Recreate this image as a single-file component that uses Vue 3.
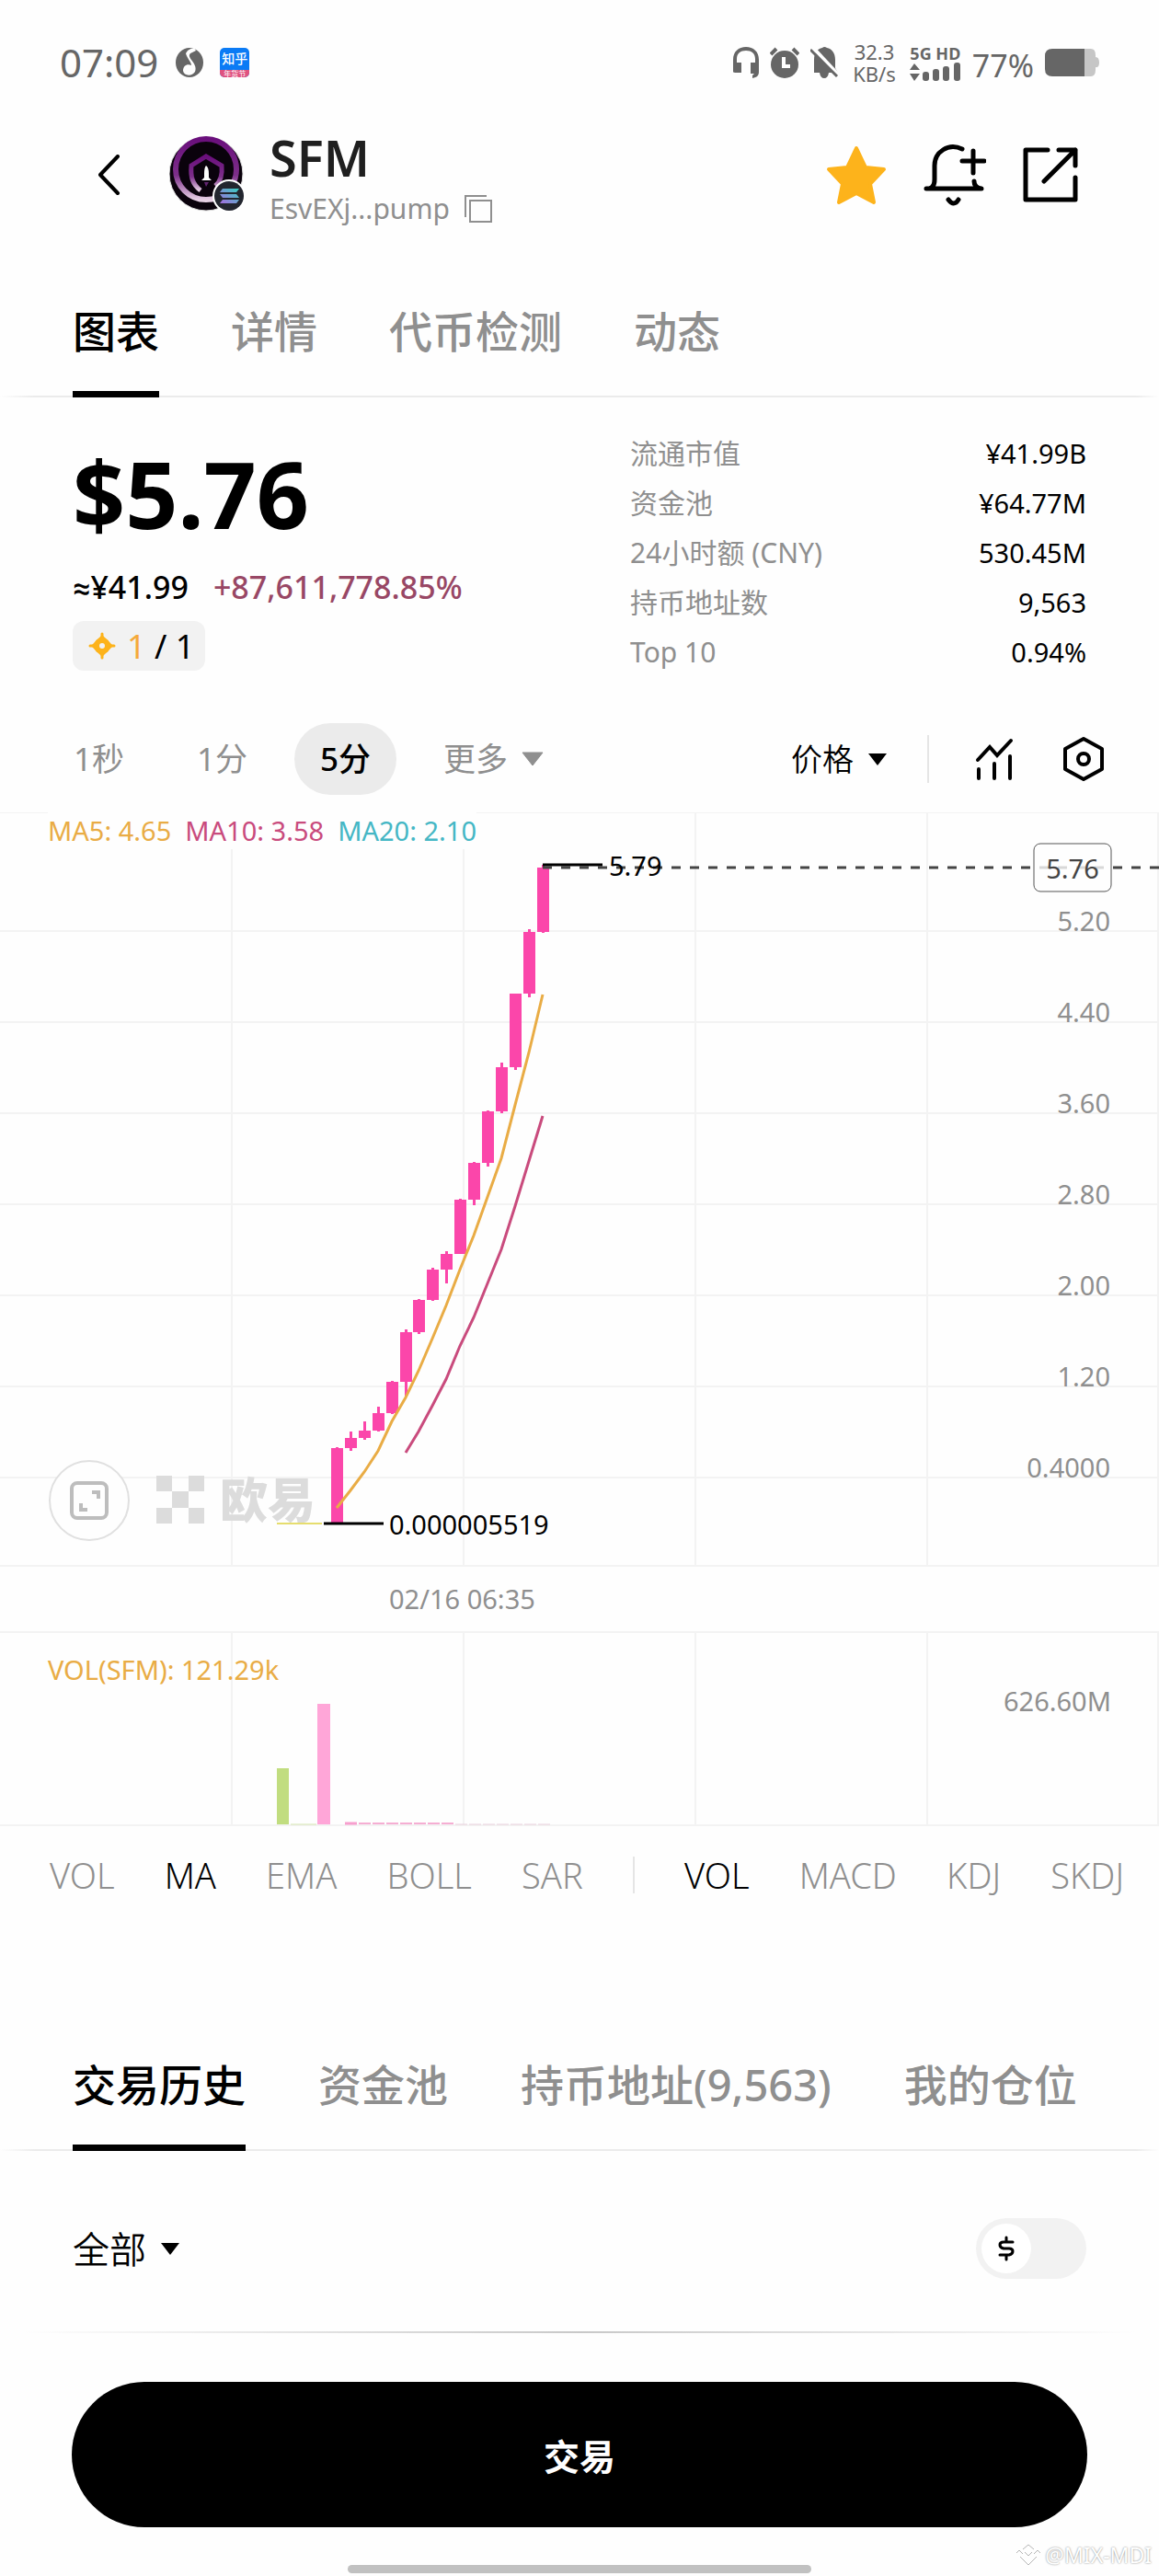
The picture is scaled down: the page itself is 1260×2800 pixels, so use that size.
<template>
  <div class="page">
    <!-- 状态栏 -->
    <div class="status-bar">
      <span class="clock">07:09</span>
      <svg class="music-icon" width="30" height="32" viewBox="0 0 30 32">
        <ellipse cx="15" cy="16" rx="15" ry="16" fill="#666" />
        <path d="M20 0L22 3L16 6C14 8 15 10 17 13C20 17 23 21 21 26C18 31 9 31 8 25C8 20 12 17 17 19C17 15 12 11 11 6C13 2 16 1 20 0Z" fill="#fefefe" />
      </svg>
      <span class="app-badge"><b>知乎</b><i>年货节</i></span>
      <div class="status-right">
        <svg width="28" height="34" viewBox="0 0 28 34" fill="#666">
          <path d="M0 27V14C0 5 6 0 14 0S28 5 28 14V27C28 31 26 33 21 34V31L23 29H19V17H24V13C24 7 20 4 14 4S4 7 4 13V17H9V28H4Q0 28 0 27Z" />
        </svg>
        <svg width="32" height="34" viewBox="0 0 32 34">
          <circle cx="16" cy="19" r="15" fill="#666" />
          <path d="M1 8L7 2M31 8L25 2" stroke="#666" stroke-width="4" />
          <path d="M15 11V21H22" fill="none" stroke="#fefefe" stroke-width="4" />
        </svg>
        <svg width="31" height="34" viewBox="0 0 31 34">
          <path d="M4 28V14C4 6 8 2 13 1Q15 -1 18 1C23 2 27 6 27 14V23L30 28H20Q19 34 15 34T10 28H1Z" fill="#666" />
          <path d="M3 1L31 31" stroke="#fefefe" stroke-width="4" />
          <path d="M0 3L29 32" stroke="#666" stroke-width="3" />
        </svg>
        <div class="net-speed"><span>32.3</span><span>KB/s</span></div>
        <div class="signal">
          <span>5G HD</span>
          <svg width="56" height="20" viewBox="0 0 56 20" fill="#666">
            <path d="M0 8L5 1L11 8ZM0 12L5 20L11 12Z" />
            <rect x="14" y="10" width="7" height="10" rx="3" />
            <rect x="25" y="7" width="7" height="13" rx="3" />
            <rect x="36" y="4" width="7" height="16" rx="3" />
            <rect x="48" y="0" width="7" height="20" rx="3" />
          </svg>
        </div>
        <span class="battery-text">77%</span>
        <svg width="59" height="30" viewBox="0 0 59 30">
          <path d="M43 0H50Q55 0 55 7V9Q59 9 59 15T55 20V23Q55 30 50 30H43Z" fill="#c6c6c6" />
          <path d="M8 0H43V30H8Q0 30 0 22V8Q0 0 8 0Z" fill="#666" />
        </svg>
      </div>
    </div>

    <!-- 代币头部 -->
    <header class="header">
      <button class="icon-btn" aria-label="返回">
        <svg width="26" height="44" viewBox="0 0 26 44">
          <path d="M23 2L4 22L23 42" fill="none" stroke="#000" stroke-width="4" stroke-linecap="round" stroke-linejoin="round" />
        </svg>
      </button>
      <svg class="avatar" width="84" height="84" viewBox="0 0 84 84">
        <defs>
          <linearGradient id="ring" x1="0" y1="0" x2="0" y2="1">
            <stop offset="0" stop-color="#6a0f7c" />
            <stop offset="0.6" stop-color="#7d2f8a" />
            <stop offset="1" stop-color="#e6cfe4" />
          </linearGradient>
          <linearGradient id="sol" x1="0" y1="1" x2="1" y2="0">
            <stop offset="0" stop-color="#a66be0" />
            <stop offset="1" stop-color="#37cfc0" />
          </linearGradient>
        </defs>
        <circle cx="40" cy="41" r="40" fill="#0a020c" stroke="#ddd" />
        <circle cx="40" cy="36" r="33" fill="none" stroke="url(#ring)" stroke-width="6" />
        <path d="M34 59C25 52 23 44 24 32L40 22L57 32C58 42 56 49 50 54" fill="none" stroke="url(#ring)" stroke-width="5" />
        <path d="M40 32Q43 34 43 41V45L46 48H35L38 45V41Q38 34 40 32Z" fill="#fff" />
        <path d="M38 50H43L40 55Z" fill="#61246f" />
        <circle cx="65" cy="65" r="18" fill="#fff" />
        <circle cx="65" cy="65" r="16" fill="#23262f" />
        <path d="M58 57H76L73 61H55ZM55 63H73L76 67H58ZM58 69H76L73 73H55Z" fill="url(#sol)" />
      </svg>
      <div class="token">
        <h1>SFM</h1>
        <div class="address">
          <span>EsvEXj...pump</span>
          <button class="icon-btn" aria-label="复制地址">
            <svg width="30" height="30" viewBox="0 0 30 30" fill="none" stroke="#8f8f8f" stroke-width="2">
              <path d="M1 24V1H24" />
              <rect x="6" y="6" width="23" height="23" />
            </svg>
          </button>
        </div>
      </div>
      <div class="header-actions">
        <button class="icon-btn" aria-label="收藏">
          <svg width="66" height="66" viewBox="0 0 66 66">
            <path d="M33 4L43 25L63 27L48 43L52 63L33 53L14 63L18 43L3 27L23 25Z" fill="#fdb31b" stroke="#fdb31b" stroke-width="4" stroke-linejoin="round" />
          </svg>
        </button>
        <button class="icon-btn" aria-label="价格提醒">
          <svg width="68" height="68" viewBox="0 0 68 68" fill="none" stroke="#000" stroke-width="5" stroke-linecap="round" stroke-linejoin="round">
            <path d="M42 6C27 -1 12 9 12 24V39Q12 48 6 49H3H63Q55 48 55 41" />
            <path d="M54 8V32M42 19H66M27 61Q33 69 38 61" />
          </svg>
        </button>
        <button class="icon-btn" aria-label="分享">
          <svg width="60" height="60" viewBox="0 0 60 60" fill="none" stroke="#000" stroke-width="5" stroke-linecap="round" stroke-linejoin="round">
            <path d="M27 3H3V57H57V33" />
            <path d="M39 3H57V20M57 3L23 37" />
          </svg>
        </button>
      </div>
    </header>

    <nav class="tabs main-tabs">
      <button v-for="t in mainTabs" :key="t" :class="{ active: t === mainTab }" @click="mainTab = t">{{ t }}</button>
    </nav>

    <!-- 价格与数据 -->
    <section class="summary">
      <div class="price-box">
        <div class="price">$5.76</div>
        <div class="price-sub">
          <span>≈¥41.99</span>
          <span class="change">+87,611,778.85%</span>
        </div>
        <div class="rank">
          <svg width="30" height="30" viewBox="0 0 30 30">
            <path d="M15 2V28M2 15H28" stroke="#fdb31b" stroke-width="3" stroke-linecap="round" />
            <path d="M15 3Q18 6 21 9Q24 12 27 15Q24 18 21 21Q18 24 15 27Q12 24 9 21Q6 18 3 15Q6 12 9 9Q12 6 15 3Z" fill="#fdb31b" />
            <circle cx="15" cy="15" r="9" fill="#fdb31b" />
            <circle cx="15" cy="15" r="3" fill="#f2f2f2" />
          </svg>
          <span><em>1</em> / 1</span>
        </div>
      </div>
      <dl class="stats">
        <div v-for="s in stats" :key="s.label">
          <dt>{{ s.label }}</dt>
          <dd>{{ s.value }}</dd>
        </div>
      </dl>
    </section>

    <div class="toolbar">
      <div class="intervals">
        <button v-for="i in intervals" :key="i" :class="{ active: i === interval }" @click="interval = i">{{ i }}</button>
        <button>
          更多
          <svg width="24" height="16" viewBox="0 0 24 16"><path d="M1 1H23L12 15Z" fill="#8f8f8f" stroke="#8f8f8f" stroke-linejoin="round" /></svg>
        </button>
      </div>
      <div class="tools">
        <label class="picker">
          <select v-model="metric" aria-label="图表指标">
            <option>价格</option>
            <option>市值</option>
          </select>
          <svg width="20" height="13" viewBox="0 0 20 13"><path d="M0 0H20L10 13Z" /></svg>
        </label>
        <span class="divider"></span>
        <button class="icon-btn" aria-label="指标">
          <svg width="42" height="46" viewBox="0 0 42 46" fill="none" stroke="#000" stroke-width="4" stroke-linecap="round">
            <path d="M3 24L16 10L24 19L39 3M4 34V44M21 28V44M38 20V44" />
          </svg>
        </button>
        <button class="icon-btn" aria-label="设置">
          <svg width="44" height="50" viewBox="0 0 44 50" fill="none" stroke="#000" stroke-width="4" stroke-linejoin="round">
            <path d="M22 3L42 14V36L22 47L2 36V14Z" />
            <circle cx="22" cy="25" r="6" />
          </svg>
        </button>
      </div>
    </div>

    <!-- K 线图 -->
    <section class="chart">
      <svg viewBox="0 0 1260 820">
        <g class="grid">
          <path v-for="x in gridX" :key="'x' + x" :d="`M${x} 0V820`" />
          <path v-for="y in gridY" :key="'y' + y" :d="`M0 ${y}H1260`" />
        </g>
        <g fill="#dcdcdc">
          <path d="M170 721h17v17h-17zM205 721h17v17h-17zM187 738h18v18h-18zM170 756h17v17h-17zM205 756h17v17h-17z" />
          <text class="brand" x="239" y="767">欧易</text>
        </g>
        <path d="M301 773H350" stroke="#e6dd6e" stroke-width="2" />
        <g v-for="(c, i) in candles" :key="i" fill="#fb46aa">
          <rect :x="candleX(i) - 6" :y="c[1]" width="13" :height="c[2] - c[1]" />
          <rect :x="candleX(i) - 1" :y="c[0]" width="3" :height="c[3] - c[0]" />
        </g>
        <polyline :points="linePoints(ma5, 0)" class="ma" stroke="#e9ac45" />
        <polyline :points="linePoints(ma10, 5)" class="ma" stroke="#c94b7d" />
        <path d="M590 60H1260" stroke="#444" stroke-width="3" stroke-dasharray="10 10" />
        <path d="M590 57H655M352 773H417" stroke="#000" stroke-width="3" />
        <text x="662" y="69">5.79</text>
        <text x="423" y="785">0.000005519</text>
        <rect x="1124" y="34" width="84" height="52" rx="7" fill="#fefefe" fill-opacity="0.8" stroke="#555" />
        <text x="1166" y="72" text-anchor="middle" fill="#444">5.76</text>
        <text v-for="(l, i) in axis" :key="l" x="1207" :y="129 + i * 99" text-anchor="end" fill="#8f8f8f">{{ l }}</text>
      </svg>
      <div class="legend">
        <span class="c-yellow">MA5: 4.65</span>
        <span class="c-pink">MA10: 3.58</span>
        <span class="c-cyan">MA20: 2.10</span>
      </div>
      <button class="expand" aria-label="全屏">
        <svg width="42" height="42" viewBox="0 0 42 42" fill="none" stroke="#bdbdbd" stroke-width="4">
          <rect x="2" y="2" width="38" height="38" rx="6" />
          <path d="M24 12H31V19M12 24V31H19" />
        </svg>
      </button>
    </section>
    <div class="time-axis">02/16 06:35</div>
    <section class="chart">
      <svg viewBox="0 0 1260 210">
        <g class="grid">
          <path v-for="x in gridX" :key="x" :d="`M${x} 0V209`" />
          <path d="M0 209H1260" />
        </g>
        <rect x="301" y="147" width="13" height="61" fill="#c1dd80" />
        <rect x="345" y="77" width="14" height="131" fill="#ffa6d8" />
        <path d="M316 208H344" stroke="#d5e5b0" stroke-width="1" />
        <path d="M375 207H388" stroke="#f79fce" stroke-width="3" />
        <path d="M390 207H493" stroke="#f5aed3" stroke-width="2" stroke-dasharray="13 2" />
        <path d="M495 208H598" stroke="#e9cfdc" stroke-width="1" stroke-dasharray="13 2" />
        <text x="1208" y="85" text-anchor="end" fill="#8f8f8f">626.60M</text>
      </svg>
      <div class="legend vol-legend"><span class="c-yellow">VOL(SFM): 121.29k</span></div>
    </section>

    <div class="indicators">
      <button v-for="n in mainIndicators" :key="n" :class="{ active: n === 'MA' }">{{ n }}</button>
      <span class="divider"></span>
      <button v-for="n in subIndicators" :key="n" :class="{ active: n === 'VOL' }">{{ n }}</button>
    </div>

    <nav class="tabs history-tabs">
      <button v-for="t in historyTabs" :key="t" :class="{ active: t === historyTab }" @click="historyTab = t">{{ t }}</button>
    </nav>

    <div class="filter">
      <label class="picker">
        <select v-model="filter" aria-label="交易类型">
          <option>全部</option>
          <option>买入</option>
          <option>卖出</option>
        </select>
        <svg width="20" height="13" viewBox="0 0 20 13"><path d="M0 0H20L10 13Z" /></svg>
      </label>
      <label class="switch">
        <input v-model="showToken" type="checkbox" aria-label="切换计价单位">
        <span class="knob">
          <svg width="18" height="28" viewBox="0 0 18 28" fill="none" stroke="#000" stroke-width="3" stroke-linecap="round" stroke-linejoin="round">
            <path d="M16 7H6Q2 7 2 10T6 14H12Q16 14 16 17T12 21H2M9 2V7M9 21V26" />
          </svg>
        </span>
      </label>
    </div>

    <footer class="footer">
      <button class="trade">交易</button>
      <div class="home-bar"></div>
      <div class="author">
        <svg width="28" height="24" viewBox="0 0 28 24" fill="none" stroke="#b5b5b5" stroke-width="1">
          <path d="M8 6L14 1L20 6M1 10L4 7L8 11M20 11L24 7L27 10M10 9L14 13L18 9M5 14L14 23L23 14" />
        </svg>
        <span>@MIX-MDI</span>
      </div>
    </footer>
  </div>
</template>

<script setup>
import { ref } from 'vue'

const mainTabs = ['图表', '详情', '代币检测', '动态']
const mainTab = ref('图表')
const historyTabs = ['交易历史', '资金池', '持币地址(9,563)', '我的仓位']
const historyTab = ref('交易历史')
const intervals = ['1秒', '1分', '5分']
const interval = ref('5分')
const metric = ref('价格')
const filter = ref('全部')
const showToken = ref(false)

const stats = [
  { label: '流通市值', value: '¥41.99B' },
  { label: '资金池', value: '¥64.77M' },
  { label: '24小时额 (CNY)', value: '530.45M' },
  { label: '持币地址数', value: '9,563' },
  { label: 'Top 10', value: '0.94%' }
]

const mainIndicators = ['VOL', 'MA', 'EMA', 'BOLL', 'SAR']
const subIndicators = ['VOL', 'MACD', 'KDJ', 'SKDJ']

const gridX = [252, 504, 756, 1008, 1259]
const gridY = [0, 129, 228, 327, 426, 525, 624, 723, 819]
const axis = ['5.20', '4.40', '3.60', '2.80', '2.00', '1.20', '0.4000']

// [最高, 实体上沿, 实体下沿, 最低]
const candles = [
  [690, 691, 772, 772],
  [673, 680, 691, 694],
  [662, 672, 680, 682],
  [646, 653, 672, 673],
  [618, 619, 653, 654],
  [562, 565, 619, 635],
  [529, 530, 565, 567],
  [495, 497, 530, 531],
  [477, 480, 497, 512],
  [420, 421, 480, 480],
  [380, 381, 421, 427],
  [324, 325, 381, 385],
  [272, 277, 325, 327],
  [197, 197, 277, 280],
  [127, 130, 197, 201],
  [57, 60, 130, 131]
]
const ma5 = [756, 737, 717, 694, 662, 636, 607, 572, 536, 497, 460, 418, 376, 318, 261, 198]
const ma10 = [696, 673, 645, 616, 580, 549, 512, 475, 428, 379, 330]

const candleX = (i) => Math.round(366 + i * 14.9)
const linePoints = (list, start) => list.map((y, i) => `${candleX(i + start)},${y}`).join(' ')
</script>

<style>
body {
  background: #fefefe;
}
</style>

<style scoped>
.page {
  font-family: "Noto Sans", "Noto Sans CJK SC", sans-serif;
  color: #000;
  background: #fefefe;
}

button,
select {
  font: inherit;
  color: inherit;
  background: none;
  border: none;
  padding: 0;
  margin: 0;
  cursor: pointer;
}

svg {
  display: block;
  flex-shrink: 0;
}

.icon-btn {
  display: flex;
}

/* 状态栏 */
.status-bar {
  display: flex;
  align-items: center;
  height: 136px;
  padding: 0 65px;
  color: #666;
}

.clock {
  font-size: 42px;
  line-height: 48px;
}

.music-icon {
  margin-left: 19px;
}

.app-badge {
  display: flex;
  flex-direction: column;
  width: 32px;
  margin-left: 18px;
  border-radius: 5px;
  overflow: hidden;
  color: #fff;
  background: #0b7bf5;
  text-align: center;
}

.app-badge b {
  font-size: 14px;
  line-height: 24px;
  font-weight: 500;
}

.app-badge i {
  font-size: 8px;
  line-height: 8px;
  font-style: normal;
  background: #e0527f;
}

.status-right {
  display: flex;
  align-items: center;
  gap: 12px;
  margin-left: auto;
}

.net-speed,
.signal {
  display: flex;
  flex-direction: column;
  align-items: center;
}

.net-speed {
  margin: 0 3px;
  font-size: 22px;
  line-height: 24px;
}

.signal span {
  font-size: 18px;
  line-height: 20px;
  font-weight: 700;
}

.battery-text {
  font-size: 34px;
  line-height: 40px;
  padding-top: 6px;
}

/* 头部 */
.header {
  display: flex;
  align-items: center;
  height: 108px;
  padding: 0 88px 0 105px;
}

.avatar {
  margin-left: 53px;
}

.token {
  align-self: flex-start;
  margin-left: 25px;
  padding-top: 5px;
}

.token h1 {
  margin: 0;
  font-size: 54px;
  line-height: 60px;
  font-weight: 600;
  color: #1f1f1f;
}

.address {
  display: flex;
  align-items: center;
  gap: 16px;
  font-size: 30px;
  line-height: 52px;
  color: #8f8f8f;
}

.header-actions {
  display: flex;
  align-items: center;
  gap: 40px;
  margin-left: auto;
}

/* 标签页 */
.tabs {
  display: flex;
  gap: 78px;
  padding: 0 79px;
  font-size: 47px;
  line-height: 60px;
  font-weight: 500;
  color: #8f8f8f;
  white-space: nowrap;
  background: linear-gradient(90deg, transparent, #ebebeb 3%, #ebebeb 98%, transparent) bottom / 100% 2px no-repeat;
}

.tabs button {
  padding-bottom: 35px;
  border-bottom: 7px solid transparent;
}

.tabs .active {
  color: #000;
  border-color: #000;
}

.main-tabs {
  margin-top: 86px;
}

/* 价格 */
.summary {
  display: flex;
  justify-content: space-between;
  padding: 34px 79px 0;
}

.price-box {
  padding-top: 10px;
}

.price {
  font-size: 100px;
  line-height: 120px;
  font-weight: 700;
}

.price-sub {
  display: flex;
  gap: 27px;
  margin-top: 18px;
  font-family: "Noto Sans", Roboto, sans-serif;
  font-size: 34px;
  line-height: 48px;
  font-weight: 500;
}

.change {
  color: #984765;
}

.rank {
  display: inline-flex;
  align-items: center;
  gap: 12px;
  height: 54px;
  margin-top: 13px;
  padding: 0 12px 0 17px;
  border-radius: 12px;
  background: #f2f2f2;
  font-size: 36px;
}

.rank em {
  font-style: normal;
  color: #f5a93a;
}

.stats {
  width: 45%;
  margin: 0;
}

.stats div {
  display: flex;
  justify-content: space-between;
  line-height: 54px;
}

.stats dt {
  font-size: 30px;
  color: #8f8f8f;
}

.stats dd {
  margin: 0;
  font-size: 29px;
}

/* 周期栏 */
.toolbar {
  display: flex;
  align-items: center;
  justify-content: space-between;
  height: 80px;
  margin: 49px 0 18px;
  padding: 0 60px 0 52px;
}

.intervals {
  display: flex;
  gap: 23px;
  font-size: 35px;
  line-height: 44px;
  color: #8f8f8f;
}

.intervals button {
  display: flex;
  align-items: center;
  gap: 15px;
  height: 78px;
  padding: 0 28px;
  border-radius: 39px;
}

.intervals .active {
  background: #ebebeb;
  color: #000;
  font-weight: 500;
}

.tools {
  display: flex;
  align-items: center;
  font-size: 34px;
}

.tools .icon-btn {
  margin-left: 50px;
}

.tools .divider {
  height: 52px;
  margin-left: 44px;
}

.tools .icon-btn + .icon-btn {
  margin-left: 54px;
}

.divider {
  width: 2px;
  background: #e5e5e5;
}

.picker {
  display: flex;
  align-items: center;
  gap: 16px;
  font-weight: 350;
}

.picker select {
  appearance: none;
  outline: none;
}

/* 图表 */
.chart {
  position: relative;
}

.chart svg {
  width: 100%;
}

.chart text {
  font-size: 29px;
}

.chart .brand {
  font-size: 52px;
  font-weight: 900;
}

.grid {
  stroke: #f3f3f3;
  stroke-width: 2;
}

.ma {
  fill: none;
  stroke-width: 3;
}

.legend {
  position: absolute;
  top: 0;
  left: 52px;
  display: flex;
  gap: 15px;
  font-size: 29px;
  line-height: 40px;
  background: #fefefe;
}

.vol-legend {
  top: 20px;
  background: none;
}

.c-yellow {
  color: #e9ac45;
}

.c-pink {
  color: #c94b7d;
}

.c-cyan {
  color: #45b7c5;
}

.expand {
  position: absolute;
  bottom: 28px;
  left: 53px;
  display: flex;
  align-items: center;
  justify-content: center;
  width: 88px;
  height: 88px;
  border: 2px solid #e0e0e0;
  border-radius: 50%;
  background: #fefefe;
}

.expand svg {
  width: 42px;
}

.time-axis {
  padding-left: 423px;
  border-bottom: 2px solid #f3f3f3;
  font-size: 29px;
  line-height: 70px;
  color: #8f8f8f;
}

.indicators {
  display: flex;
  align-items: center;
  justify-content: space-between;
  height: 106px;
  padding: 0 38px 0 54px;
  font-size: 38px;
  font-weight: 300;
  color: #8f8f8f;
}

.indicators .divider {
  height: 40px;
}

.indicators .active {
  color: #000;
}

.history-tabs {
  gap: 79px;
  margin-top: 145px;
}

.filter {
  display: flex;
  align-items: center;
  justify-content: space-between;
  height: 144px;
  padding: 34px 79px 18px;
  font-size: 40px;
}

.switch {
  position: relative;
  width: 120px;
  height: 66px;
  border-radius: 33px;
  background: #f2f2f2;
  cursor: pointer;
}

.switch input {
  position: absolute;
  inset: 0;
  margin: 0;
  opacity: 0;
}

.knob {
  display: flex;
  align-items: center;
  justify-content: center;
  width: 54px;
  height: 54px;
  margin: 6px;
  border-radius: 50%;
  background: #fff;
}

.switch input:checked + .knob {
  margin-left: 60px;
}

.footer {
  position: relative;
  padding: 55px 78px 0;
  background: linear-gradient(90deg, transparent 2%, #c8c8c8 50%, transparent 98%) top / 100% 2px no-repeat;
}

.trade {
  display: block;
  width: 100%;
  height: 158px;
  border-radius: 79px;
  background: #000;
  color: #fff;
  font-size: 39px;
  font-weight: 700;
}

.home-bar {
  width: 504px;
  height: 9px;
  margin: 41px auto 0;
  border-radius: 5px;
  background: #c1c1c1;
}

.author {
  position: absolute;
  right: 8px;
  bottom: 4px;
  display: flex;
  align-items: center;
  gap: 4px;
  font-size: 23px;
  line-height: 32px;
  color: #fff;
  text-shadow: 0 0 2px #777;
}
</style>
